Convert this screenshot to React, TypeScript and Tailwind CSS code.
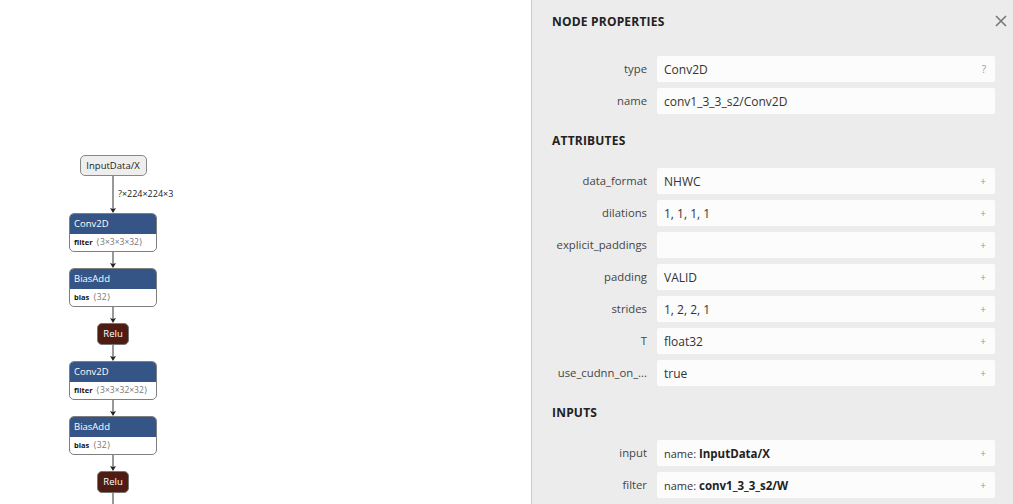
import React from "react";

const font = { fontFamily: '"Open Sans", "Noto Sans", sans-serif' };

function Edge({ h }: { h: number }) {
  return (
    <svg width="10" height={h} viewBox={`0 0 10 ${h}`} className="block shrink-0">
      <line x1="5" y1="0" x2="5" y2={h - 3} stroke="#333" strokeWidth="1" />
      <path d={`M2 ${h - 5} L5 ${h} L8 ${h - 5} L5 ${h - 4} Z`} fill="#222" />
    </svg>
  );
}

function OpNode({ title, attr, value, h }: { title: string; attr: string; value: string; h: string }) {
  return (
    <div className={`w-[88px] ${h} shrink-0 rounded-[5px] border border-[#7f7f7f] bg-white overflow-hidden flex flex-col`}>
      <div className="h-[20px] shrink-0 bg-[#355586] text-white text-[9.5px] leading-[20px] pl-[4px]">{title}</div>
      <div className="flex-1 flex items-center pl-[4px] text-[7.5px] leading-none whitespace-nowrap">
        <span className="font-bold text-[#111]">{attr}</span>
        <span className="ml-[3.5px] text-[8.5px] text-[#777]">{value}</span>
      </div>
    </div>
  );
}

function Relu() {
  return (
    <div className="w-[32px] h-[22px] shrink-0 rounded-[5px] border border-[#777] bg-[#4f1c13] text-white text-[9.5px] leading-[20px] text-center">
      Relu
    </div>
  );
}

function Row({ label, children, sym = "+" }: { label: string; children?: React.ReactNode; sym?: string }) {
  return (
    <div className="flex h-[26px] items-center">
      <div className="w-[95px] shrink-0 flex justify-end pt-[1px] text-[11.3px] text-[#444] whitespace-nowrap">{label}</div>
      <div className="ml-[10px] w-[338px] h-[26px] rounded-[2px] bg-[#fcfcfc] flex items-center pl-[7px] pr-[9px] pt-[1px] text-[12px] text-[#333]">
        <span className="flex-1 whitespace-nowrap">{children}</span>
        <span className="text-[10px] text-[#999]">{sym}</span>
      </div>
    </div>
  );
}

function Heading({ children, className = "" }: { children: React.ReactNode; className?: string }) {
  return <div className={`text-[12px] font-bold text-[#222] leading-[16px] tracking-[0.2px] ${className}`}>{children}</div>;
}

export default function App() {
  return (
    <div className="w-[1013px] h-[504px] flex overflow-hidden bg-white" style={font}>
      <div className="w-[531px] shrink-0 pt-[155px] pl-[69px]">
        <div className="w-[88px] flex flex-col items-center">
          <div className="w-[67px] h-[21px] shrink-0 rounded-[5px] border border-[#888] bg-[#eeeeee] text-[#222] text-[9.5px] leading-[19px] text-center whitespace-nowrap">
            InputData/X
          </div>
          <div className="relative">
            <Edge h={37} />
            <span className="absolute left-[10px] top-[12px] text-[9px] leading-[12px] text-[#222] whitespace-nowrap">?×224×224×3</span>
          </div>
          <OpNode title="Conv2D" attr="filter" value="⟨3×3×3×32⟩" h="h-[39px]" />
          <Edge h={16} />
          <OpNode title="BiasAdd" attr="bias" value="⟨32⟩" h="h-[39px]" />
          <Edge h={16} />
          <Relu />
          <Edge h={16} />
          <OpNode title="Conv2D" attr="filter" value="⟨3×3×32×32⟩" h="h-[39px]" />
          <Edge h={16} />
          <OpNode title="BiasAdd" attr="bias" value="⟨32⟩" h="h-[39px]" />
          <Edge h={16} />
          <Relu />
          <Edge h={16} />
        </div>
      </div>
      <div className="relative flex-1 h-[504px] border-l border-[#cccccc] bg-[#ececec] pl-[20px] overflow-hidden">
        <Heading className="mt-[14px]">NODE PROPERTIES</Heading>
        <svg width="12" height="12" viewBox="0 0 12 12" className="absolute left-[463px] top-[15px]">
          <path d="M1 1 L11 11 M11 1 L1 11" stroke="#777" strokeWidth="1.6" />
        </svg>
        <div className="mt-[26px] flex flex-col gap-[6px]">
          <Row label="type" sym="?">Conv2D</Row>
          <Row label="name" sym="">conv1_3_3_s2/Conv2D</Row>
        </div>
        <Heading className="mt-[19px]">ATTRIBUTES</Heading>
        <div className="mt-[19px] flex flex-col gap-[6px]">
          <Row label="data_format">NHWC</Row>
          <Row label="dilations">1, 1, 1, 1</Row>
          <Row label="explicit_paddings" />
          <Row label="padding">VALID</Row>
          <Row label="strides">1, 2, 2, 1</Row>
          <Row label="T">float32</Row>
          <Row label="use_cudnn_on_...">true</Row>
        </div>
        <Heading className="mt-[19px]">INPUTS</Heading>
        <div className="mt-[19px] flex flex-col gap-[6px]">
          <Row label="input"><span className="text-[11px]">name: </span><b className="text-[11.5px] text-[#222]">InputData/X</b></Row>
          <Row label="filter"><span className="text-[11px]">name: </span><b className="text-[11.5px] text-[#222]">conv1_3_3_s2/W</b></Row>
        </div>
      </div>
    </div>
  );
}
